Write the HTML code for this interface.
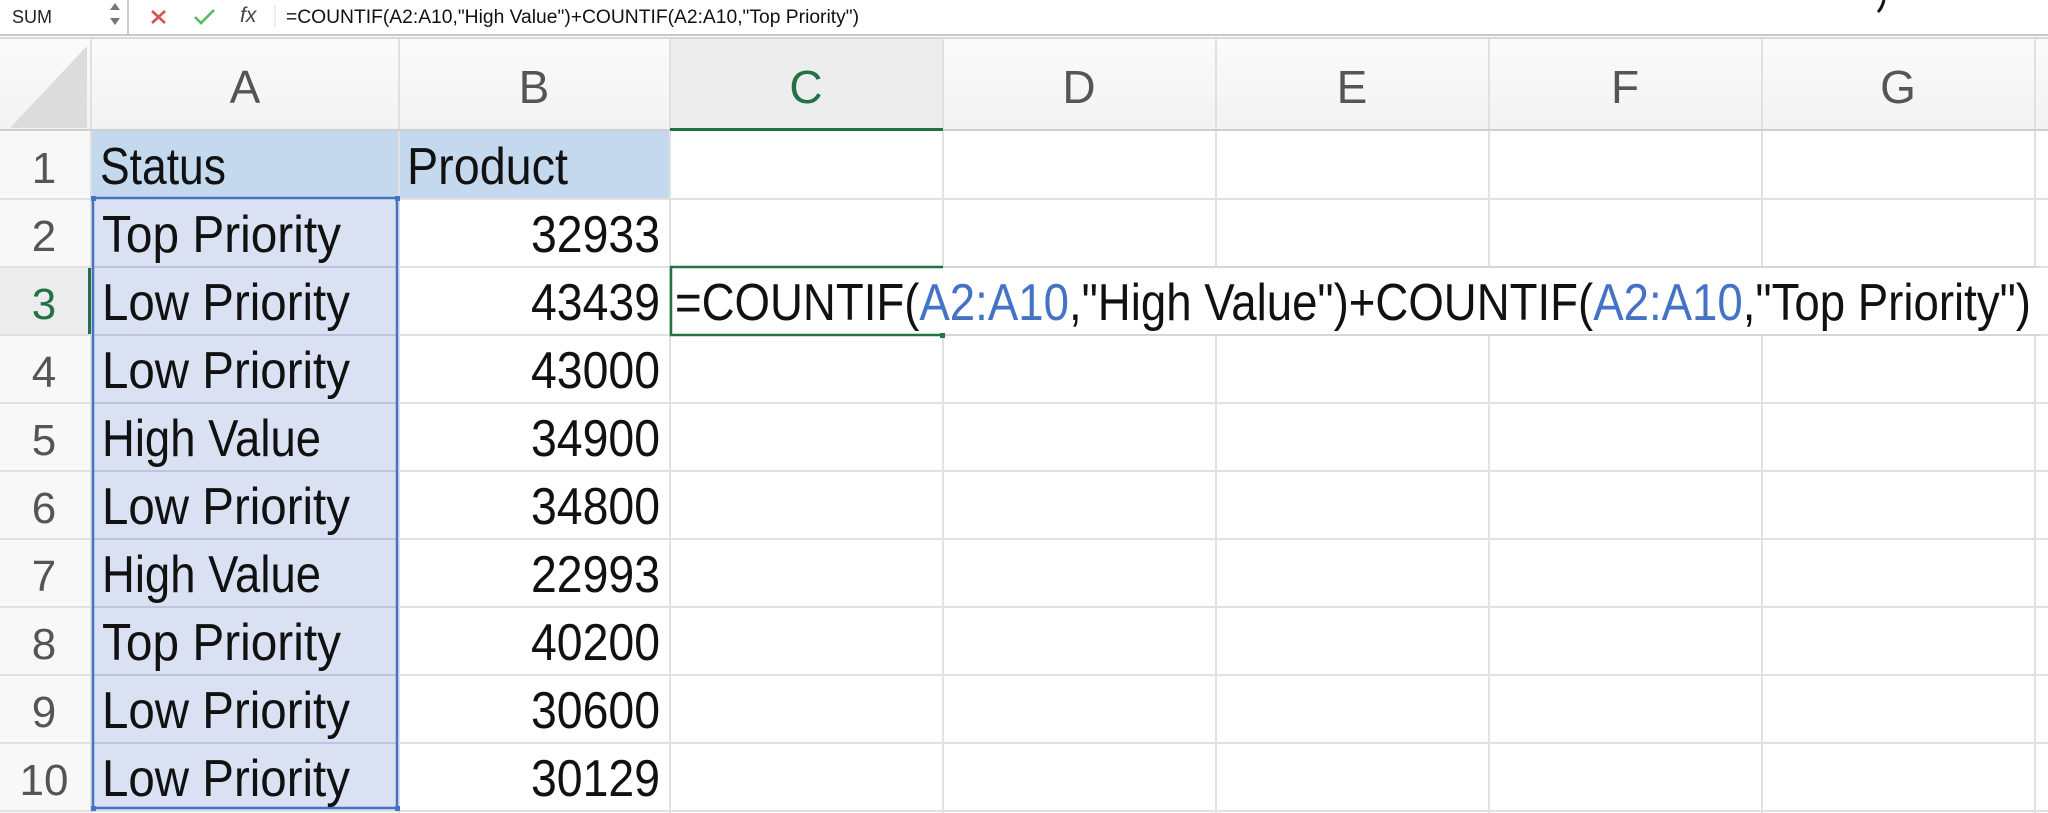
<!DOCTYPE html>
<html><head><meta charset="utf-8"><style>
html,body{margin:0;padding:0;background:#fff;}
svg{display:block;}
text{font-family:"Liberation Sans",sans-serif;}
</style></head><body>
<svg width="2048" height="813" viewBox="0 0 2048 813" xmlns="http://www.w3.org/2000/svg">
<defs>
<linearGradient id="hg" x1="0" y1="0" x2="0" y2="1"><stop offset="0" stop-color="#fbfbfb"/><stop offset="1" stop-color="#f2f2f2"/></linearGradient>
</defs>
<rect width="2048" height="813" fill="#fff"/>
<!-- formula bar -->
<rect x="0" y="0" width="2048" height="35" fill="#fff"/>
<text x="12" y="23" font-size="18" fill="#222" textLength="40" lengthAdjust="spacingAndGlyphs">SUM</text>
<path d="M110 10 L115 3 L120 10Z M110 18 L115 25 L120 18Z" fill="#777"/>
<line x1="128" y1="0" x2="128" y2="34" stroke="#ccc" stroke-width="2"/>
<path d="M152 11 L165 23 M165 11 L152 23" stroke="#d9534f" stroke-width="2.6"/>
<path d="M195 17 L201 23 L214 10" stroke="#5cb85c" stroke-width="2.6" fill="none"/>
<text x="240" y="22" font-size="21" font-style="italic" fill="#444" font-family="Liberation Serif">fx</text>
<line x1="275" y1="5" x2="275" y2="27" stroke="#ddd" stroke-width="1"/>
<text x="286" y="23" font-size="19" fill="#111" textLength="573" lengthAdjust="spacingAndGlyphs">=COUNTIF(A2:A10,"High Value")+COUNTIF(A2:A10,"Top Priority")</text>
<path d="M1884 0 Q1882 8 1878 12" stroke="#111" stroke-width="3" fill="none"/>
<rect x="0" y="34" width="2048" height="2" fill="#c8c8c8"/>
<rect x="0" y="37" width="2048" height="2" fill="#d8d8d8"/>
<!-- header row -->
<rect x="0" y="39" width="2048" height="92" fill="url(#hg)"/>
<rect x="670" y="39" width="273" height="92" fill="#ededed"/>
<path d="M10 128 L87 46 L87 128Z" fill="#dcdcdc"/>
<g stroke="#e0e0e0" stroke-width="2">
<line x1="91" y1="39" x2="91" y2="813"/>
<line x1="399" y1="39" x2="399" y2="131"/>
<line x1="670" y1="39" x2="670" y2="131"/>
<line x1="943" y1="39" x2="943" y2="131"/>
<line x1="1216" y1="39" x2="1216" y2="131"/>
<line x1="1489" y1="39" x2="1489" y2="131"/>
<line x1="1762" y1="39" x2="1762" y2="131"/>
<line x1="2035" y1="39" x2="2035" y2="131"/>
</g>
<rect x="0" y="129" width="2048" height="2" fill="#cfcfcf"/>
<rect x="670" y="128" width="273" height="3" fill="#217346"/>
<g font-size="46" fill="#555" text-anchor="middle">
<text x="245" y="103">A</text><text x="534" y="103">B</text>
<text x="806" y="103" fill="#217346">C</text><text x="1079" y="103">D</text>
<text x="1352" y="103">E</text><text x="1625" y="103">F</text><text x="1898" y="103">G</text>
</g>
<!-- row headers -->
<rect x="0" y="131" width="90" height="682" fill="#f8f8f8"/>
<rect x="0" y="267" width="90" height="68" fill="#ececec"/>
<rect x="88" y="267" width="3" height="68" fill="#217346"/>
<!-- cells fills -->
<rect x="92" y="131" width="578" height="68" fill="#c5d9ee"/>
<rect x="92" y="199" width="307" height="612" fill="#d9e1f3"/>
<!-- grid -->
<g stroke="#e1e1e1" stroke-width="2">
<line x1="399" y1="131" x2="399" y2="813"/>
<line x1="670" y1="131" x2="670" y2="813"/>
<line x1="943" y1="131" x2="943" y2="813"/>
<line x1="1216" y1="131" x2="1216" y2="813"/>
<line x1="1489" y1="131" x2="1489" y2="813"/>
<line x1="1762" y1="131" x2="1762" y2="813"/>
<line x1="2035" y1="131" x2="2035" y2="813"/>
<line x1="0" y1="199" x2="2048" y2="199"/>
<line x1="0" y1="267" x2="2048" y2="267"/>
<line x1="0" y1="335" x2="2048" y2="335"/>
<line x1="0" y1="403" x2="2048" y2="403"/>
<line x1="0" y1="471" x2="2048" y2="471"/>
<line x1="0" y1="539" x2="2048" y2="539"/>
<line x1="0" y1="607" x2="2048" y2="607"/>
<line x1="0" y1="675" x2="2048" y2="675"/>
<line x1="0" y1="743" x2="2048" y2="743"/>
<line x1="0" y1="811" x2="2048" y2="811"/>
</g>
<g stroke="#bcc6de" stroke-width="2">
<line x1="93" y1="267" x2="397" y2="267"/><line x1="93" y1="335" x2="397" y2="335"/>
<line x1="93" y1="403" x2="397" y2="403"/><line x1="93" y1="471" x2="397" y2="471"/>
<line x1="93" y1="539" x2="397" y2="539"/><line x1="93" y1="607" x2="397" y2="607"/>
<line x1="93" y1="675" x2="397" y2="675"/><line x1="93" y1="743" x2="397" y2="743"/>
</g>
<!-- selection border -->
<rect x="93" y="198" width="304" height="610" fill="none" stroke="#4472c4" stroke-width="2.5"/>
<rect x="91" y="196" width="5" height="5" fill="#4472c4"/><rect x="395" y="196" width="5" height="5" fill="#4472c4"/>
<rect x="91" y="806" width="5" height="5" fill="#4472c4"/><rect x="395" y="806" width="5" height="5" fill="#4472c4"/>
<!-- row numbers -->
<g font-size="44" fill="#555" text-anchor="middle">
<text x="44" y="183">1</text><text x="44" y="251">2</text><text x="44" y="319" fill="#217346">3</text>
<text x="44" y="387">4</text><text x="44" y="455">5</text><text x="44" y="523">6</text>
<text x="44" y="591">7</text><text x="44" y="659">8</text><text x="44" y="727">9</text><text x="44" y="795">10</text>
</g>
<!-- cell text -->
<g font-size="52" fill="#111">
<text x="100" y="184" textLength="126" lengthAdjust="spacingAndGlyphs">Status</text>
<text x="407" y="184" textLength="161" lengthAdjust="spacingAndGlyphs">Product</text>
<text x="102" y="252" textLength="239" lengthAdjust="spacingAndGlyphs">Top Priority</text>
<text x="102" y="320" textLength="248" lengthAdjust="spacingAndGlyphs">Low Priority</text>
<text x="102" y="388" textLength="248" lengthAdjust="spacingAndGlyphs">Low Priority</text>
<text x="102" y="456" textLength="219" lengthAdjust="spacingAndGlyphs">High Value</text>
<text x="102" y="524" textLength="248" lengthAdjust="spacingAndGlyphs">Low Priority</text>
<text x="102" y="592" textLength="219" lengthAdjust="spacingAndGlyphs">High Value</text>
<text x="102" y="660" textLength="239" lengthAdjust="spacingAndGlyphs">Top Priority</text>
<text x="102" y="728" textLength="248" lengthAdjust="spacingAndGlyphs">Low Priority</text>
<text x="102" y="796" textLength="248" lengthAdjust="spacingAndGlyphs">Low Priority</text>
</g>
<g font-size="52" fill="#111">
<text x="531" y="252" textLength="129" lengthAdjust="spacingAndGlyphs">32933</text>
<text x="531" y="320" textLength="129" lengthAdjust="spacingAndGlyphs">43439</text>
<text x="531" y="388" textLength="129" lengthAdjust="spacingAndGlyphs">43000</text>
<text x="531" y="456" textLength="129" lengthAdjust="spacingAndGlyphs">34900</text>
<text x="531" y="524" textLength="129" lengthAdjust="spacingAndGlyphs">34800</text>
<text x="531" y="592" textLength="129" lengthAdjust="spacingAndGlyphs">22993</text>
<text x="531" y="660" textLength="129" lengthAdjust="spacingAndGlyphs">40200</text>
<text x="531" y="728" textLength="129" lengthAdjust="spacingAndGlyphs">30600</text>
<text x="531" y="796" textLength="129" lengthAdjust="spacingAndGlyphs">30129</text>
</g>
<!-- editing cell C3 -->
<rect x="671" y="268" width="1370" height="66" fill="#fff"/>
<line x1="943" y1="267" x2="2040" y2="267" stroke="#d6d6d6" stroke-width="2"/>
<line x1="943" y1="335" x2="2040" y2="335" stroke="#d6d6d6" stroke-width="2"/>
<path d="M943 267 L671 267 L671 335 L943 335" fill="none" stroke="#217346" stroke-width="2.5"/>
<rect x="940" y="333" width="5" height="5" fill="#217346"/>
<text x="675" y="320" font-size="52" fill="#111" textLength="1356" lengthAdjust="spacingAndGlyphs">=COUNTIF(<tspan fill="#4472c4">A2:A10</tspan>,"High Value")+COUNTIF(<tspan fill="#4472c4">A2:A10</tspan>,"Top Priority")</text>
</svg>
</body></html>
